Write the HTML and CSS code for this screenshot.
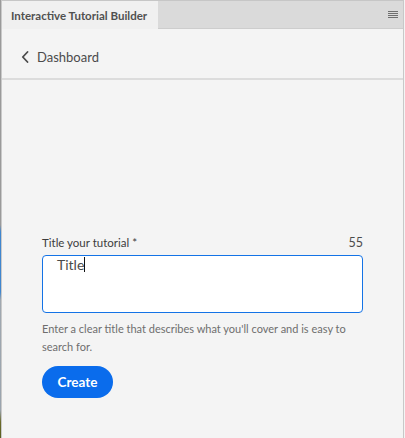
FILE: index.html
```html
<!DOCTYPE html>
<html lang="en">
<head>
<meta charset="utf-8">
<title>Interactive Tutorial Builder</title>
<link rel="stylesheet" href="styles.css">
</head>
<body>
<div class="frame">
  <div class="desk-edge"></div>
  <div class="panel">
    <div class="tabbar">
      <div class="tab">Interactive Tutorial Builder</div>
      <div class="tab-fill">
        <svg class="menu-icon" width="10" height="7" viewBox="0 0 10 7" aria-hidden="true">
          <rect x="0" y="0" width="10" height="1" fill="#6e6e6e"/>
          <rect x="0" y="2" width="10" height="1" fill="#6e6e6e"/>
          <rect x="0" y="4" width="10" height="1" fill="#6e6e6e"/>
          <rect x="0" y="6" width="10" height="1" fill="#6e6e6e"/>
        </svg>
      </div>
    </div>
    <div class="header">
      <svg class="chevron" width="8" height="12" viewBox="0 0 8 12" aria-hidden="true">
        <path d="M6.5 1 L1.8 6 L6.5 11" fill="none" stroke="#4b4b4b" stroke-width="1.8" stroke-linecap="round" stroke-linejoin="round"/>
      </svg>
      <span class="header-title">Dashboard</span>
    </div>
    <div class="content">
      <div class="form">
        <div class="label-row">
          <span class="label">Title your tutorial *</span>
          <span class="count">55</span>
        </div>
        <div class="field"><span class="field-text">Title</span><span class="caret"></span></div>
        <p class="help">Enter a clear title that describes what you'll cover and is easy to search for.</p>
        <button class="cta">Create</button>
      </div>
    </div>
  </div>
  <div class="right-edge"></div>
</div>
</body>
</html>
```

FILE: styles.css
```css
html, body {
  margin: 0;
  padding: 0;
  height: 100%;
}
body {
  background: #f4f4f4;
  font-family: Lato, "Open Sans", sans-serif;
  color: #4b4b4b;
}
.frame {
  display: flex;
  height: 438px;
  width: 405px;
  overflow: hidden;
}
.desk-edge {
  width: 1px;
  flex: none;
  background: linear-gradient(to bottom, #9a9a9a 0px, #9a9a9a 225px, #3f86cf 232px, #3f86cf 292px, #a0a8b0 300px, #9aa4ae 410px, #6b6a2a 422px, #5a5f20 438px);
}
.panel {
  flex: 1;
  display: flex;
  flex-direction: column;
  border-left: 1px solid #c9c9c9;
  border-top: 1px solid #c6c6c6;
}
.right-edge {
  width: 2px;
  flex: none;
  background: #f4f4f4;
  border-left: 1px solid #c8c8c8;
}
.tabbar {
  display: flex;
  height: 28px;
  flex: none;
  background: #dadada;
}
.tab {
  width: 147px;
  padding-left: 9px;
  background: #f0f0f0;
  font-weight: 700;
  font-size: 11.5px;
  line-height: 29px;
  color: #505050;
  white-space: nowrap;
}
.tab-fill {
  flex: 1;
  display: flex;
  justify-content: flex-end;
  align-items: center;
  padding-right: 5px;
  border-bottom: 1px solid #cdcdcd;
}
.menu-icon {
  display: block;
  margin-top: -1px;
}
.header {
  box-sizing: border-box;
  height: 51px;
  flex: none;
  display: flex;
  align-items: center;
  padding: 7px 0 0 19px;
  gap: 8px;
  border-bottom: 2px solid #dcdcdc;
}
.chevron {
  display: block;
}
.header-title {
  font-size: 13px;
  color: #4b4b4b;
}
.content {
  flex: 1;
  padding: 151px 40px 0 40px;
}
.form {
  width: 321px;
}
.label-row {
  display: flex;
  justify-content: space-between;
  align-items: baseline;
  height: 16px;
  line-height: 16px;
}
.label {
  font-size: 11.5px;
  color: #3c3c3c;
}
.count {
  font-size: 12.5px;
  color: #4b4b4b;
  margin-top: 4px;
}
.field {
  margin-top: 8px;
  height: 56px;
  background: #fff;
  border: 1px solid #1473e6;
  border-radius: 4px;
  padding-left: 14px;
  display: flex;
  align-items: flex-start;
  line-height: 18px;
}
.field-text {
  font-size: 14px;
  color: #4b4b4b;
}
.caret {
  width: 1px;
  height: 15px;
  background: #111;
  margin-top: 1px;
}
.help {
  margin: 7px 0 0 0;
  font-size: 11px;
  line-height: 18px;
  color: #6e6e6e;
}
.cta {
  margin-top: 10px;
  display: block;
  width: 71px;
  height: 32px;
  border: none;
  border-radius: 16px;
  background: #0a6cec;
  color: #fff;
  font-family: Lato, "Open Sans", sans-serif;
  font-weight: 700;
  font-size: 13.5px;
  padding: 0;
}
```
